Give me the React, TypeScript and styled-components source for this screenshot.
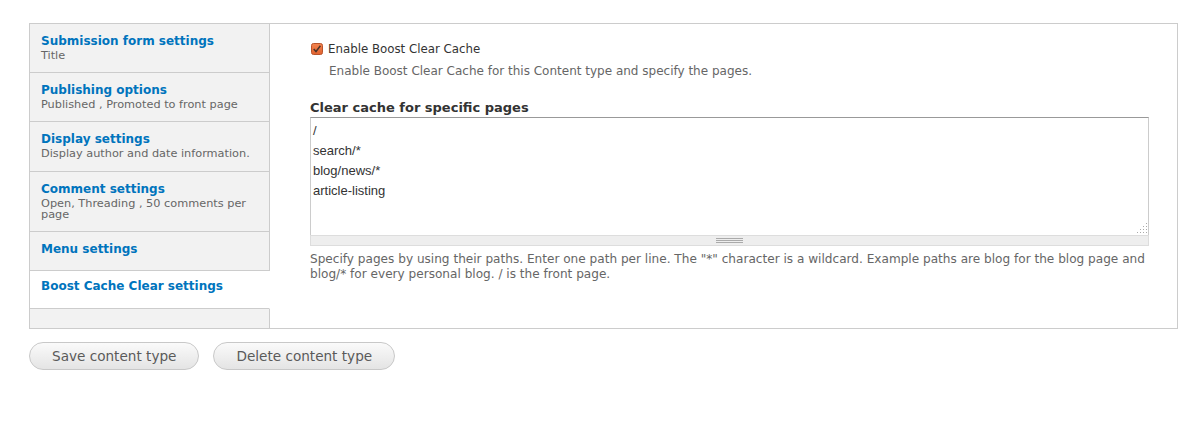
import React from "react";
import styled, { createGlobalStyle } from "styled-components";

const Global = createGlobalStyle`
  html, body { margin: 0; padding: 0; background: #fff; }
  body { font-family: "DejaVu Sans", Verdana, sans-serif; color: #333; }
`;

const Page = styled.div`
  padding: 23px 21px 0 29px;
`;

const VerticalTabs = styled.div`
  display: flex;
  border: 1px solid #ccc;
  background: #fff;
`;

const TabList = styled.ul`
  list-style: none;
  margin: 0;
  padding: 0;
  width: 240px;
  display: flex;
  flex-direction: column;
  flex-shrink: 0;
`;

const Tab = styled.li<{ $selected?: boolean; $hasSummary?: boolean }>`
  box-sizing: border-box;
  padding: ${(p) =>
    p.$selected ? "7px 10px 11px 11px" : p.$hasSummary ? "9px 10px 11px 11px" : "9px 10px 12px 11px"};
  background: ${(p) => (p.$selected ? "#fff" : "#f2f2f2")};
  border-bottom: 1px solid #ccc;
  border-right: 1px solid ${(p) => (p.$selected ? "#fff" : "#ccc")};
  min-height: ${(p) => (p.$selected ? "38px" : "auto")};
`;

const TabTitle = styled.strong`
  display: block;
  font-size: 12px;
  line-height: 17px;
  font-weight: bold;
  color: #0074bd;
`;

const TabSummary = styled.span`
  display: block;
  font-size: 11.3px;
  line-height: 11.2px;
  color: #666;
`;

const Filler = styled.li`
  flex: 1;
  min-height: 19px;
  background: #f2f2f2;
  border-right: 1px solid #ccc;
`;

const Pane = styled.div`
  flex: 1;
  padding: 15px 28px 20px 40px;
`;

const CheckRow = styled.label`
  display: flex;
  align-items: center;
  gap: 5px;
  font-size: 11.8px;
  line-height: 20px;
  color: #333;
`;

const CheckBox = styled.span`
  display: inline-flex;
  width: 12px;
  height: 12px;
  margin-left: 1px;
`;

const Description = styled.div<{ $indent?: boolean }>`
  font-size: ${(p) => (p.$indent ? "12px" : "12.1px")};
  line-height: 15px;
  color: #666;
  margin-left: ${(p) => (p.$indent ? "19px" : "0")};
  margin-top: ${(p) => (p.$indent ? "5px" : "0")};
`;

const FieldLabel = styled.div`
  margin-top: 20px;
  font-size: 13px;
  line-height: 18px;
  font-weight: bold;
  color: #333;
`;

const TextAreaWrap = styled.div`
  position: relative;
  display: flex;
  flex-direction: column;
  margin-bottom: 6px;
`;

const TextArea = styled.textarea`
  box-sizing: border-box;
  display: block;
  width: 100%;
  height: 118px;
  margin: 0;
  padding: 3px 2px;
  border: 1px solid #ccc;
  border-top-color: #999;
  border-bottom: none;
  font-family: "Liberation Sans", Arial, sans-serif;
  font-size: 13px;
  line-height: 20px;
  color: #333;
  resize: none;
  outline: none;
`;

const ResizeDots = styled.svg`
  position: absolute;
  right: 2px;
  bottom: 13px;
  width: 10px;
  height: 10px;
`;

const Grippie = styled.div`
  box-sizing: border-box;
  height: 11px;
  background: #eee;
  border: 1px solid #ddd;
  display: flex;
  justify-content: center;
  align-items: center;
`;

const GrippieLines = styled.span`
  width: 27px;
  height: 5px;
  background: repeating-linear-gradient(
    to bottom,
    #aaa 0,
    #aaa 1px,
    transparent 1px,
    transparent 2px
  );
`;

const Actions = styled.div`
  display: flex;
  gap: 14px;
  margin-top: 13px;
`;

const Button = styled.button`
  box-sizing: border-box;
  height: 28px;
  padding: 0 22px;
  border: 1px solid #c8c8c8;
  border-radius: 14px;
  background: linear-gradient(to bottom, #fafafa, #e4e4e4);
  font-family: "DejaVu Sans", Verdana, sans-serif;
  font-size: 13.6px;
  color: #5a5a5a;
  cursor: pointer;
`;

const tabs = [
  { title: "Submission form settings", summary: "Title" },
  { title: "Publishing options", summary: "Published , Promoted to front page" },
  { title: "Display settings", summary: "Display author and date information." },
  { title: "Comment settings", summary: "Open, Threading , 50 comments per page" },
  { title: "Menu settings", summary: "" },
  { title: "Boost Cache Clear settings", summary: "", selected: true },
];

const Check = () => (
  <svg width="12" height="12" viewBox="0 0 12 12">
    <defs>
      <linearGradient id="cb" x1="0" y1="0" x2="0" y2="1">
        <stop offset="0" stopColor="#f3844f" />
        <stop offset="1" stopColor="#e0622f" />
      </linearGradient>
    </defs>
    <rect x="0.5" y="0.5" width="11" height="11" rx="2" fill="url(#cb)" stroke="#b9532a" />
    <path d="M2.7 6 L5 8.5 L9.4 2.8" fill="none" stroke="#4a342a" strokeWidth="1.5" />
  </svg>
);

const dots: [number, number][] = [
  [9, 0],
  [9, 3], [6, 3],
  [9, 6], [6, 6], [3, 6],
  [9, 9], [6, 9], [3, 9], [0, 9],
];

export default function App() {
  return (
    <Page>
      <Global />
      <VerticalTabs>
        <TabList>
          {tabs.map((t) => (
            <Tab key={t.title} $selected={t.selected} $hasSummary={!!t.summary}>
              <TabTitle>{t.title}</TabTitle>
              {t.summary && <TabSummary>{t.summary}</TabSummary>}
            </Tab>
          ))}
          <Filler />
        </TabList>
        <Pane>
          <CheckRow>
            <CheckBox>
              <Check />
            </CheckBox>
            Enable Boost Clear Cache
          </CheckRow>
          <Description $indent>
            Enable Boost Clear Cache for this Content type and specify the pages.
          </Description>
          <FieldLabel>Clear cache for specific pages</FieldLabel>
          <TextAreaWrap>
            <TextArea defaultValue={"/\nsearch/*\nblog/news/*\narticle-listing"} />
            <ResizeDots viewBox="0 0 10 10">
              {dots.map(([x, y]) => (
                <rect key={`${x}-${y}`} x={x} y={y} width="1" height="1" fill="#aaa" />
              ))}
            </ResizeDots>
            <Grippie>
              <GrippieLines />
            </Grippie>
          </TextAreaWrap>
          <Description>
            Specify pages by using their paths. Enter one path per line. The "*" character is a
            wildcard. Example paths are blog for the blog page and blog/* for every personal blog. /
            is the front page.
          </Description>
        </Pane>
      </VerticalTabs>
      <Actions>
        <Button>Save content type</Button>
        <Button>Delete content type</Button>
      </Actions>
    </Page>
  );
}
